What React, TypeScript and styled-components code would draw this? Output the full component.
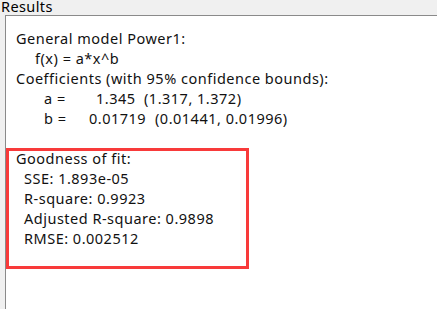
import styled, { createGlobalStyle } from "styled-components";

const GlobalStyle = createGlobalStyle`
  html, body {
    margin: 0;
    padding: 0;
    background: #f0f0f0;
  }
  body {
    font-family: "Noto Sans", "Open Sans", sans-serif;
    color: #111;
  }
`;

const Frame = styled.div`
  width: 437px;
  height: 309px;
  display: flex;
  flex-direction: column;
  overflow: hidden;
`;

const Title = styled.div`
  height: 15px;
  padding-left: 1px;
  font-size: 14.5px;
  letter-spacing: 0.4px;
  line-height: 13px;
  color: #000;
`;

const Panel = styled.div`
  flex: 1;
  margin-left: 5px;
  background: #fff;
  border-left: 1px solid #8a8a8a;
  border-top: 1px solid #8a8a8a;
  padding: 12px 0 0 10px;
  font-size: 14.5px;
  letter-spacing: 0.5px;
  line-height: 20px;
`;

const Line = styled.div<{ $indent?: number }>`
  height: 20px;
  white-space: nowrap;
  padding-left: ${(p) => p.$indent ?? 0}px;
`;

const CoefRow = styled.div`
  display: flex;
  height: 20px;
  white-space: nowrap;
  padding-left: 28px;
`;

const CoefName = styled.span`
  width: 52px;
`;

const CoefValue = styled.span<{ $shift: number; $width: number }>`
  margin-left: ${(p) => p.$shift}px;
  width: ${(p) => p.$width}px;
`;

const Blank = styled.div`
  height: 20px;
`;

const Goodness = styled.div`
  position: relative;
`;

const Highlight = styled.div`
  position: absolute;
  left: -10px;
  top: 0px;
  width: 243px;
  height: 121px;
  box-sizing: border-box;
  border: 3px solid #f83a3a;
  pointer-events: none;
`;

const coefs = [
  { name: "a =", value: "1.345", bounds: "(1.317, 1.372)", shift: 0, width: 48 },
  { name: "b =", value: "0.01719", bounds: "(0.01441, 0.01996)", shift: -7, width: 66 },
];

const stats = [
  "SSE: 1.893e-05",
  "R-square: 0.9923",
  "Adjusted R-square: 0.9898",
  "RMSE: 0.002512",
];

export default function App() {
  return (
    <>
      <GlobalStyle />
      <Frame>
        <Title>Results</Title>
        <Panel>
          <Line>General model Power1:</Line>
          <Line $indent={19}>f(x) = a*x^b</Line>
          <Line>Coefficients (with 95% confidence bounds):</Line>
          {coefs.map((c) => (
            <CoefRow key={c.name}>
              <CoefName>{c.name}</CoefName>
              <CoefValue $shift={c.shift} $width={c.width}>
                {c.value}
              </CoefValue>
              <span>{c.bounds}</span>
            </CoefRow>
          ))}
          <Blank />
          <Goodness>
            <Highlight />
            <Line>Goodness of fit:</Line>
            {stats.map((s) => (
              <Line key={s} $indent={8}>
                {s}
              </Line>
            ))}
          </Goodness>
        </Panel>
      </Frame>
    </>
  );
}
